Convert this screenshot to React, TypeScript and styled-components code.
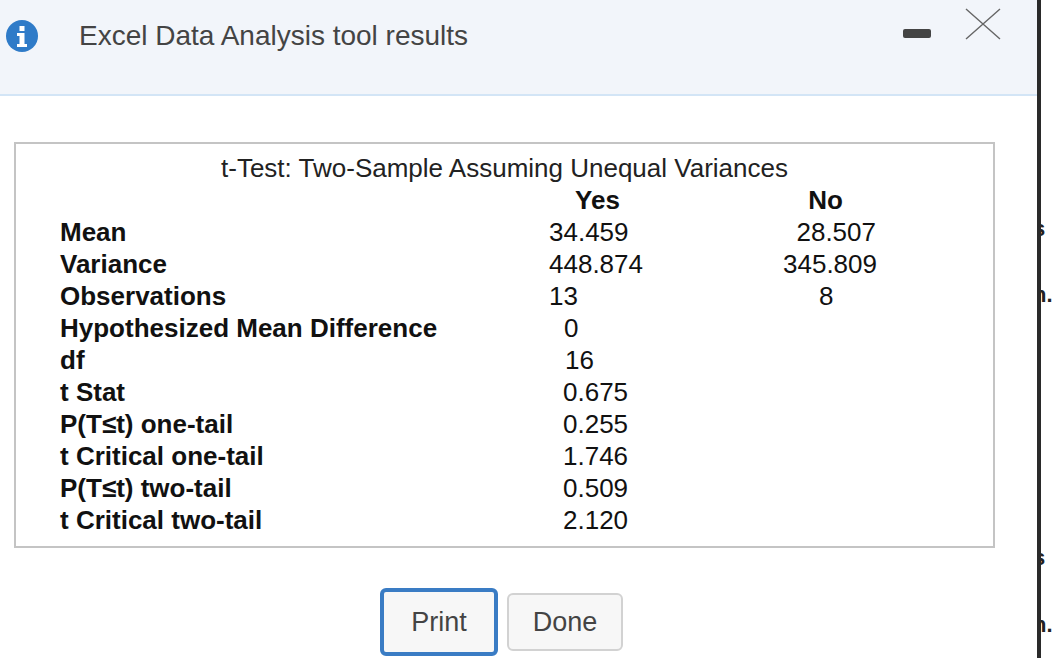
import * as React from "react";
import styled, { createGlobalStyle } from "styled-components";

const Global = createGlobalStyle`
	html, body { margin: 0; padding: 0; background: #fff; }
	body { font-family: "Liberation Sans", Arial, sans-serif; color: #111; }
`;

const Page = styled.div`
	width: 1056px;
	height: 658px;
	display: flex;
	overflow: hidden;
`;

const Dialog = styled.div`
	width: 1037px;
	display: flex;
	flex-direction: column;
	background: #fff;
`;

const Edge = styled.div`
	width: 4px;
	background: #2a2a2a;
`;

const Beyond = styled.div`
	flex: 1;
	position: relative;
	font-size: 22px;
	font-weight: bold;
	color: #222;
	overflow: hidden;
`;

const Peek = styled.span<{ $top: number }>`
	position: absolute;
	top: ${(p) => p.$top}px;
	left: -8px;
`;

const Header = styled.div`
	height: 94px;
	background: #f2f5fa;
	border-bottom: 2px solid #d3e5f6;
	display: flex;
	align-items: flex-start;
	padding: 0 0 0 6px;
	position: relative;
`;

const Title = styled.div`
	margin: 20px 0 0 41px;
	font-size: 28px;
	color: #444;
`;

const Minimize = styled.div`
	position: absolute;
	left: 903px;
	top: 29px;
	width: 28px;
	height: 9px;
	border-radius: 2px;
	background: #444;
`;

const Close = styled.svg`
	position: absolute;
	left: 963px;
	top: 6px;
`;

const Body = styled.div`
	padding: 46px 42px 0 14px;
`;

const Box = styled.div`
	border: 2px solid #c4c4c4;
	height: 406px;
	box-sizing: border-box;
	padding: 8px 0 0 44px;
`;

const Caption = styled.div`
	font-size: 26px;
	text-align: center;
	margin-left: -44px;
	height: 32px;
	line-height: 32px;
	color: #222;
`;

const Grid = styled.div`
	display: grid;
	grid-template-columns: 489px 79px 155px 93px;
	grid-auto-rows: 32px;
	font-size: 26px;
	line-height: 32px;
`;

const Label = styled.div`
	font-weight: bold;
	grid-column: 1;
	white-space: nowrap;
`;

const Cell = styled.div<{ $col: number; $pad?: number; $align?: string; $bold?: boolean }>`
	grid-column: ${(p) => p.$col};
	text-align: ${(p) => p.$align || "right"};
	padding-left: ${(p) => p.$pad || 0}px;
	font-weight: ${(p) => (p.$bold ? "bold" : "normal")};
	white-space: nowrap;
`;

const Buttons = styled.div`
	display: flex;
	align-items: center;
	gap: 9px;
	padding: 40px 0 0 380px;
`;

const Button = styled.button<{ $focus?: boolean }>`
	font-family: "Liberation Sans", Arial, sans-serif;
	font-size: 27px;
	color: #444;
	background: #f7f7f7;
	border-radius: 6px;
	box-sizing: border-box;
	width: ${(p) => (p.$focus ? 118 : 116)}px;
	height: ${(p) => (p.$focus ? 68 : 58)}px;
	border: ${(p) => (p.$focus ? "4px solid #3a7cc4" : "2px solid #d2d2d2")};
`;

const rows: [string, string, number, string?, number?][] = [
	["Mean", "34.459", 0, "28.507", 0],
	["Variance", "448.874", 0, "345.809", 0],
	["Observations", "13", 0, "8", 36],
	["Hypothesized Mean Difference", "0", 15],
	["df", "16", 16],
	["t Stat", "0.675", 14],
	["P(T\u2264t) one-tail", "0.255", 14],
	["t Critical one-tail", "1.746", 14],
	["P(T\u2264t) two-tail", "0.509", 14],
	["t Critical two-tail", "2.120", 14],
];

export default function App() {
	return (
		<Page>
			<Global />
			<Dialog>
				<Header>
					<svg width="32" height="32" viewBox="0 0 32 32" style={{ marginTop: 20 }}>
						<circle cx="16" cy="16" r="16" fill="#2f7bc8" />
						<rect x="13.5" y="6" width="5" height="5" fill="#fff" />
						<path d="M11 13h7.5v11H21v3H11v-3h2.5v-8H11z" fill="#fff" />
					</svg>
					<Title>Excel Data Analysis tool results</Title>
					<Minimize />
					<Close width="40" height="34" viewBox="0 0 40 34">
						<path d="M3 3L37 33M37 3L3 33" stroke="#666" strokeWidth="1.4" />
					</Close>
				</Header>
				<Body>
					<Box>
						<Caption>t-Test: Two-Sample Assuming Unequal Variances</Caption>
						<Grid>
							<Label />
							<Cell $col={2} $align="center" $pad={18} $bold>
								Yes
							</Cell>
							<Cell $col={4} $align="center" $bold style={{ paddingRight: 8 }}>
								No
							</Cell>
							{rows.map(([label, yes, pad, no, noPad]) => (
								<React.Fragment key={label}>
									<Label>{label}</Label>
									<Cell $col={2} $align={pad ? "left" : yes.length < 4 ? "left" : "right"} $pad={pad}>
										{yes}
									</Cell>
									{no !== undefined && (
										<Cell $col={4} $align={noPad ? "left" : "right"} $pad={noPad}>
											{no}
										</Cell>
									)}
								</React.Fragment>
							))}
						</Grid>
					</Box>
				</Body>
				<Buttons>
					<Button $focus>Print</Button>
					<Button>Done</Button>
				</Buttons>
			</Dialog>
			<Edge />
			<Beyond>
				<Peek $top={216}>s</Peek>
				<Peek $top={282}>n.</Peek>
				<Peek $top={545}>s</Peek>
				<Peek $top={612}>n.</Peek>
			</Beyond>
		</Page>
	);
}
